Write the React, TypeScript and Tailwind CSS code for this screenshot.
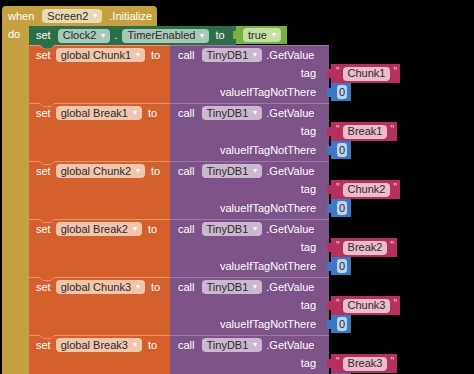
type PillProps = { label: string; bg: string; arrow?: boolean };

function Pill({ label, bg, arrow = true }: PillProps) {
  return (
    <span
      className={`inline-flex h-[14px] shrink-0 items-center whitespace-nowrap rounded-[4px] px-[5px] leading-none text-[#2b2b2b] ${bg}`}
    >
      {label}
      {arrow && <span className="ml-[5px] text-[8px] text-white/90">▾</span>}
    </span>
  );
}

function Quote() {
  return <span className="self-start pt-[3px] text-[10px] leading-none text-[#f6cddc]">"</span>;
}

function TextBlock({ value }: { value: string }) {
  return (
    <div className="flex items-start">
      <div className="mt-[5px] h-[9px] w-[4px] -ml-[2px] rounded-l-[1px] bg-[#b3305f]" />
      <div className="flex h-[19px] items-center gap-[3px] bg-[#b3305f] pl-[5px] pr-[3px]">
        <Quote />
        <Pill label={value} bg="bg-[#ecbccd]" arrow={false} />
        <Quote />
      </div>
    </div>
  );
}

function NumberBlock() {
  return (
    <div className="flex items-start">
      <div className="mt-[5px] h-[9px] w-[4px] -ml-[2px] rounded-l-[1px] bg-[#3d78c0]" />
      <div className="flex h-[18px] items-center bg-[#3d78c0] pl-[6px] pr-[4px]">
        <span className="inline-flex h-[14px] items-center rounded-[3px] bg-[#bcd3ef] px-[2px] leading-none text-[#2b2b2b]">
          0
        </span>
      </div>
    </div>
  );
}

function SetBlock({ name }: { name: string }) {
  return (
    <div className="flex h-[58px] shrink-0">
      <div className="relative w-[141px] shrink-0 bg-[#d3602d]">
        <svg className="absolute left-0 top-0" width="141" height="5">
          <path d="M0 0.5 H11 L14 3.5 H22 L25 0.5 H141" fill="none" stroke="#e8936a" strokeWidth="1" />
        </svg>
        <div className="flex h-[19px] items-center gap-[5px] pl-[7px] pt-[1px]">
          <span>set</span>
          <Pill label={`global ${name}`} bg="bg-[#f2c6ae]" />
          <span className="ml-[1px]">to</span>
        </div>
      </div>
      <div className="-ml-[4px] mt-[7px] h-[8px] w-[4px] rounded-l-[1px] bg-[#8a62a0]" />
      <div className="flex w-[159px] shrink-0 flex-col border-t border-[#9a7aa4] bg-[#7c5487] pr-[13px]">
        <div className="flex h-[18px] items-center gap-[7px] pl-[8px]">
          <span>call</span>
          <Pill label="TinyDB1" bg="bg-[#cbb8d0]" />
          <span className="-ml-[3px]">.GetValue</span>
        </div>
        <div className="flex h-[19px] items-center justify-end">tag</div>
        <div className="flex h-[19px] items-center justify-end">valueIfTagNotThere</div>
      </div>
      <div className="flex flex-col pt-[19px]">
        <div className="h-[19px]">
          <TextBlock value={name} />
        </div>
        <div className="h-[19px]">
          <NumberBlock />
        </div>
      </div>
    </div>
  );
}

const names = ["Chunk1", "Break1", "Chunk2", "Break2", "Chunk3", "Break3"];

export default function App() {
  return (
    <div className="h-[374px] w-[474px] overflow-hidden bg-black pl-[2px] pt-[6px] font-['Liberation_Sans',Arial,sans-serif] text-[11px] text-white">
      <div className="flex flex-col">
        <div className="flex h-[20px] w-[155px] items-center gap-[8px] rounded-t-[4px] bg-[#c4a040] pl-[6px]">
          <span>when</span>
          <Pill label="Screen2" bg="bg-[#e9dab3]" />
          <span className="-ml-[1px]">.Initialize</span>
        </div>
        <div className="flex">
          <div className="w-[27px] shrink-0 bg-[#c4a040] pl-[6px] pt-[2px] leading-[13px]">do</div>
          <div className="flex flex-col">
            <div className="flex items-start">
              <div className="flex h-[19px] w-[207px] items-center bg-[#2c6e48] pl-[7px]">
                <span>set</span>
                <span className="ml-[7px]">
                  <Pill label="Clock2" bg="bg-[#a9c9b8]" />
                </span>
                <span className="ml-[4px]">.</span>
                <span className="ml-[5px]">
                  <Pill label="TimerEnabled" bg="bg-[#a9c9b8]" />
                </span>
                <span className="ml-[6px]">to</span>
              </div>
              <div className="-ml-[3px] mt-[5px] h-[8px] w-[3px] bg-[#79b042]" />
              <div className="flex h-[18px] w-[51px] items-center bg-[#79b042] pl-[7px]">
                <Pill label="true" bg="bg-[#c6e0a8]" />
              </div>
            </div>
            <div className="relative z-10 -mb-[4px] ml-[10px] h-[4px] w-[16px]">
              <svg width="16" height="4">
                <path d="M0 0 H2 L5 3.5 H12 L15 0 Z" fill="#2c6e48" />
              </svg>
            </div>
            {names.map((n) => (
              <SetBlock key={n} name={n} />
            ))}
          </div>
        </div>
      </div>
    </div>
  );
}
